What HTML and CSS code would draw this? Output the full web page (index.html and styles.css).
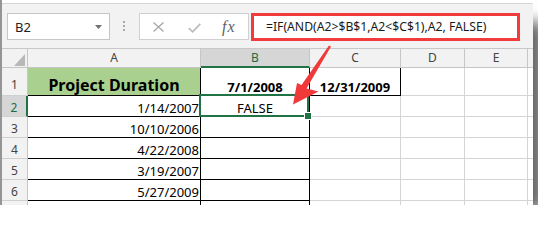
FILE: index.html
```html
<!DOCTYPE html>
<html>
<head>
<meta charset="utf-8">
<link rel="stylesheet" href="styles.css">
</head>
<body>
<div class="frame">
  <div class="toolbar">
    <div class="namebox"><span>B2</span><svg class="caret" width="7" height="4" viewBox="0 0 7 4"><path d="M0 0H7L3.5 4Z"/></svg></div>
    <div class="grip"><i></i><i></i><i></i></div>
    <div class="fbtns">
      <svg class="ic-x" width="11" height="10" viewBox="0 0 11 10"><path d="M0.5 0.5L10.5 9.5M10.5 0.5L0.5 9.5"/></svg>
      <svg class="ic-check" width="13" height="10" viewBox="0 0 13 10"><path d="M0.8 5.2L4.6 8.8L12.3 0.8"/></svg>
      <span class="fx">fx</span>
    </div>
    <div class="formula">=IF(AND(A2&gt;$B$1,A2&lt;$C$1),A2, FALSE)</div>
  </div>
  <div class="sheet">
    <div class="corner"><svg width="11" height="12" viewBox="0 0 11 12"><path d="M11 0V12H0Z"/></svg></div>
    <div class="ch">A</div>
    <div class="ch on">B</div>
    <div class="ch">C</div>
    <div class="ch">D</div>
    <div class="ch">E</div>
    <div class="ch f"></div>

    <div class="rh r1">1</div>
    <div class="c kr kb ctr title">Project Duration</div>
    <div class="c kr kb ctr bold">7/1/2008</div>
    <div class="c kr kb ctr bold">12/31/2009</div>
    <div class="c"></div>
    <div class="c"></div>
    <div class="c f"></div>

    <div class="rh on">2</div>
    <div class="c kr kb num">1/14/2007</div>
    <div class="c kr kb ctr active">FALSE<span class="selbox"><span class="handle"></span></span></div>
    <div class="c"></div>
    <div class="c"></div>
    <div class="c"></div>
    <div class="c f"></div>

    <div class="rh">3</div>
    <div class="c kr kb num">10/10/2006</div>
    <div class="c kr kb"></div>
    <div class="c"></div>
    <div class="c"></div>
    <div class="c"></div>
    <div class="c f"></div>

    <div class="rh">4</div>
    <div class="c kr kb num">4/22/2008</div>
    <div class="c kr kb"></div>
    <div class="c"></div>
    <div class="c"></div>
    <div class="c"></div>
    <div class="c f"></div>

    <div class="rh">5</div>
    <div class="c kr kb num">3/19/2007</div>
    <div class="c kr kb"></div>
    <div class="c"></div>
    <div class="c"></div>
    <div class="c"></div>
    <div class="c f"></div>

    <div class="rh">6</div>
    <div class="c kr kb num">5/27/2009</div>
    <div class="c kr kb"></div>
    <div class="c"></div>
    <div class="c"></div>
    <div class="c"></div>
    <div class="c f"></div>

    <div class="rh"></div>
    <div class="c kr"></div>
    <div class="c kr"></div>
    <div class="c"></div>
    <div class="c"></div>
    <div class="c"></div>
    <div class="c f"></div>
  </div>
  <svg class="arrow" width="538" height="208" viewBox="0 0 538 208"><polygon points="293,104.5 297,83 301.5,85 329,45.5 331,46.5 306.5,88.5 318.5,91.5"/></svg>
</div>
</body>
</html>
```

FILE: styles.css
```css
body {
  margin: 0;
  background: #fff;
}

.frame {
  position: relative;
  width: 531px;
  height: 205px;
  border-left: 2px solid #959595;
  overflow: hidden;
  background: #fff;
  box-shadow: 20px 14px 14px -8px rgba(0, 0, 0, 0.6);
  font-family: "Noto Sans", sans-serif;
}

.toolbar {
  box-sizing: border-box;
  height: 46px;
  margin-top: 3px;
  border-top: 1px solid #d6d6d6;
  border-bottom: 1px solid #c8c8c8;
  background: #f2f2f2;
  display: flex;
  align-items: flex-start;
  padding: 9px 0 0 5px;
}

.namebox {
  box-sizing: border-box;
  width: 103px;
  height: 27px;
  background: #fff;
  border: 1px solid #c6c6c6;
  display: flex;
  align-items: center;
  justify-content: space-between;
  padding: 0 7px;
  font-size: 13px;
  color: #222;
}

.caret {
  fill: #707070;
}

.grip {
  margin-left: 13px;
  width: 2px;
  padding-top: 8px;
  display: flex;
  flex-direction: column;
  gap: 2px;
}

.grip i {
  display: block;
  width: 2px;
  height: 2px;
  background: #a8a8a8;
}

.fbtns {
  margin-left: 14px;
  box-sizing: border-box;
  width: 110px;
  height: 27px;
  background: #fff;
  border: 1px solid #d0d0d0;
  display: flex;
  align-items: center;
  padding-left: 13px;
}

.ic-x {
  stroke: #a8a8a8;
  stroke-width: 1.3;
  fill: none;
}

.ic-check {
  margin-left: 24px;
  margin-top: 2px;
  stroke: #bcbcbc;
  stroke-width: 1.8;
  fill: none;
}

.fx {
  margin-left: 21px;
  font-family: "Liberation Serif", serif;
  font-style: italic;
  font-size: 16px;
  letter-spacing: 1px;
  color: #606060;
  line-height: 16px;
}

.formula {
  margin-left: 2px;
  box-sizing: border-box;
  width: 269px;
  height: 28px;
  border: 3px solid #f03c3c;
  background: #fff;
  padding-left: 12px;
  font-size: 12.2px;
  line-height: 21px;
  color: #1a1a1a;
  white-space: nowrap;
}

.sheet {
  display: grid;
  grid-template-columns: 26px 173px 109px 91px 64px 63px 5px;
  grid-template-rows: 19px 28px repeat(6, 21px);
  height: 156px;
  overflow: hidden;
}

.sheet > div {
  box-sizing: border-box;
}

.corner {
  background: #f2f2f2;
  border-right: 1px solid #c6c6c6;
  border-bottom: 1px solid #c6c6c6;
  display: flex;
  align-items: flex-end;
  justify-content: flex-end;
  padding: 0 2px 1px 0;
}

.corner svg {
  fill: #b8b8b8;
}

.ch {
  background: #f2f2f2;
  border-right: 1px solid #c6c6c6;
  border-bottom: 1px solid #c6c6c6;
  display: flex;
  align-items: center;
  justify-content: center;
  font-size: 12px;
  line-height: 18px;
  color: #444;
}

.ch.on {
  background: #d6d6d6;
  color: #1d6b40;
  border-bottom: 2px solid #217346;
}

.ch.f {
  border-right: none;
}

.rh {
  background: #f2f2f2;
  border-right: 1px solid #c6c6c6;
  border-bottom: 1px solid #d0d0d0;
  display: flex;
  align-items: flex-end;
  justify-content: center;
  font-size: 12px;
  line-height: 15px;
  padding-bottom: 1px;
  color: #444;
}

.rh.r1 {
  padding-bottom: 3px;
}

.rh.on {
  background: #d6d6d6;
  color: #1d6b40;
  border-right: 2px solid #217346;
}

.c {
  border-right: 1px solid #d4d4d4;
  border-bottom: 1px solid #d4d4d4;
  display: flex;
  align-items: flex-end;
  font-size: 13px;
  line-height: 16px;
  color: #000;
  white-space: nowrap;
}

.c.f {
  border-right: none;
}

.c.kr {
  border-right-color: #000;
}

.c.kb {
  border-bottom-color: #000;
}

.c.num {
  justify-content: flex-end;
  padding-right: 1px;
}

.c.ctr {
  justify-content: center;
}

.c.bold {
  font-weight: 700;
}

.c.title {
  background: #a9d08e;
  font-weight: 700;
  font-size: 16px;
  line-height: 20px;
}

.c.active {
  position: relative;
}

.selbox {
  position: absolute;
  left: -2px;
  top: -2px;
  right: 0;
  bottom: -1px;
  border: 2px solid #217346;
}

.handle {
  position: absolute;
  right: -4px;
  bottom: -4px;
  width: 6px;
  height: 6px;
  background: #217346;
  box-shadow: 0 0 0 1px #fff;
}

.arrow {
  position: absolute;
  left: -2px;
  top: 0;
  fill: #f03a3a;
  pointer-events: none;
}
```
